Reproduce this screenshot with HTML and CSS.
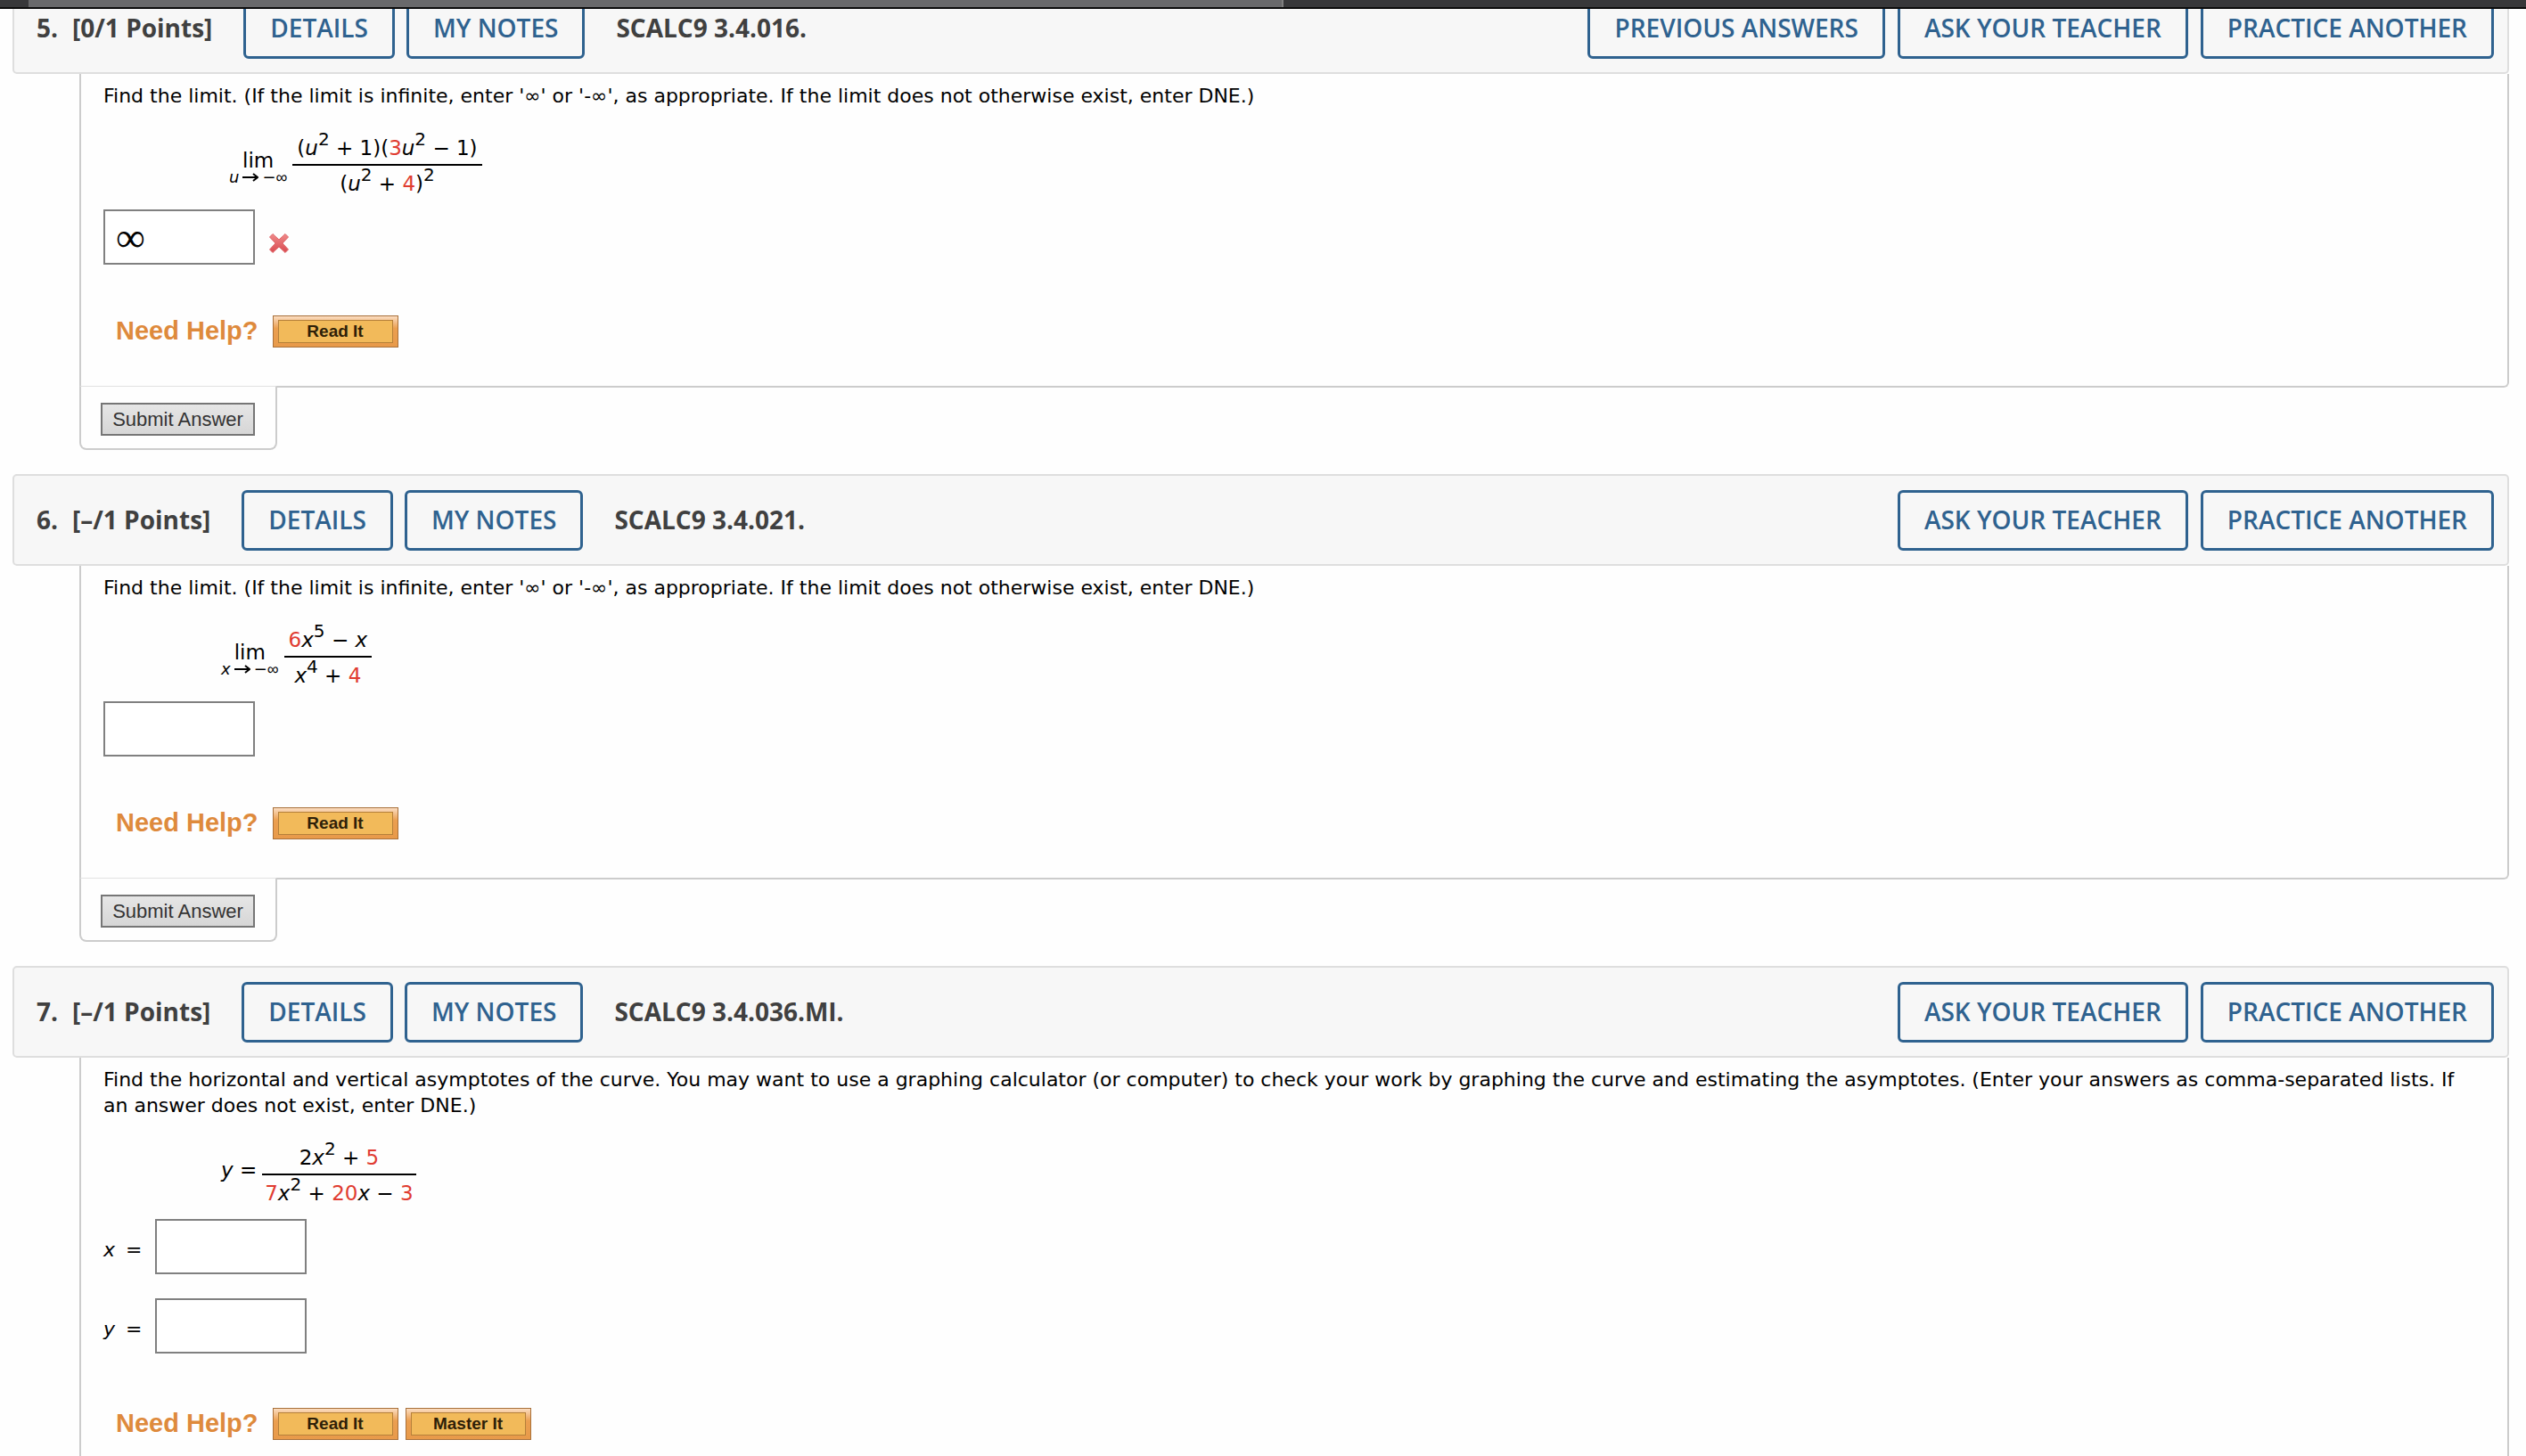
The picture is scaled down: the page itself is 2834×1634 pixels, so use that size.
FILE: index.html
```html
<!DOCTYPE html>
<html lang="en">
<head>
    <meta charset="UTF-8">
    <meta name="viewport" content="width=device-width, initial-scale=1.0">
    <title>SCALC9 3.4 Homework</title>
    <link rel="stylesheet" href="styles.css">
</head>
<body>
    <div class="page">
    <div class="top-bar"><div class="top-bar-tab"></div></div>

    <main class="assignment">
        <section class="question">
            <header class="question-header">
                <h2 class="points"><span>5.</span><span>[0/1 Points]</span></h2>
                <button type="button" class="btn">DETAILS</button>
                <button type="button" class="btn">MY NOTES</button>
                <strong class="code">SCALC9 3.4.016.</strong>
                <div class="actions">
                    <button type="button" class="btn">PREVIOUS ANSWERS</button>
                    <button type="button" class="btn">ASK YOUR TEACHER</button>
                    <button type="button" class="btn">PRACTICE ANOTHER</button>
                </div>
            </header>
            <div class="question-body">
                <p>Find the limit. (If the limit is infinite, enter '∞' or '-∞', as appropriate. If the limit does not otherwise exist, enter DNE.)</p>
                <div class="math math-wide">
                    <div class="limit">
                        <span>lim</span>
                        <span class="under"><i>u</i><svg class="arrow" viewBox="0 0 18 10"><path d="M0 5h16M12 1l5 4-5 4"/></svg>−<span class="inf">∞</span></span>
                    </div>
                    <div class="fraction">
                        <span class="num">(<i>u</i><sup>2</sup> + 1)(<b>3</b><i>u</i><sup>2</sup> − 1)</span>
                        <span class="den">(<i>u</i><sup>2</sup> + <b>4</b>)<sup>2</sup></span>
                    </div>
                </div>
                <div class="answer">
                    <input type="text" class="answer-box" value="∞" aria-label="Answer to question 5">
                    <svg class="wrong" viewBox="0 0 24 24" role="img" aria-label="Incorrect">
                        <defs>
                            <linearGradient id="red" x1="0" y1="0" x2="0" y2="1">
                                <stop offset="0" stop-color="#ef8a8a"/>
                                <stop offset="1" stop-color="#d94a50"/>
                            </linearGradient>
                        </defs>
                        <path fill="url(#red)" stroke="#e0696c" stroke-linejoin="round" d="M5 1.500L12 8l7-6.500L22.500 5 16 12l6.500 7-3.500 3.500L12 16l-7 6.500L1.500 19 8 12 1.500 5z"/>
                    </svg>
                </div>
                <div class="help">
                    <span class="help-label">Need Help?</span>
                    <button type="button" class="help-btn"><span>Read It</span></button>
                </div>
            </div>
            <div class="submit-tab"><button type="button" class="submit">Submit Answer</button></div>
        </section>

        <section class="question">
            <header class="question-header">
                <h2 class="points"><span>6.</span><span>[–/1 Points]</span></h2>
                <button type="button" class="btn">DETAILS</button>
                <button type="button" class="btn">MY NOTES</button>
                <strong class="code">SCALC9 3.4.021.</strong>
                <div class="actions">
                    <button type="button" class="btn">ASK YOUR TEACHER</button>
                    <button type="button" class="btn">PRACTICE ANOTHER</button>
                </div>
            </header>
            <div class="question-body">
                <p>Find the limit. (If the limit is infinite, enter '∞' or '-∞', as appropriate. If the limit does not otherwise exist, enter DNE.)</p>
                <div class="math">
                    <div class="limit">
                        <span>lim</span>
                        <span class="under"><i>x</i><svg class="arrow" viewBox="0 0 18 10"><path d="M0 5h16M12 1l5 4-5 4"/></svg>−<span class="inf">∞</span></span>
                    </div>
                    <div class="fraction">
                        <span class="num"><b>6</b><i>x</i><sup>5</sup> − <i>x</i></span>
                        <span class="den"><i>x</i><sup>4</sup> + <b>4</b></span>
                    </div>
                </div>
                <div class="answer">
                    <input type="text" class="answer-box" aria-label="Answer to question 6">
                </div>
                <div class="help">
                    <span class="help-label">Need Help?</span>
                    <button type="button" class="help-btn"><span>Read It</span></button>
                </div>
            </div>
            <div class="submit-tab"><button type="button" class="submit">Submit Answer</button></div>
        </section>

        <section class="question">
            <header class="question-header">
                <h2 class="points"><span>7.</span><span>[–/1 Points]</span></h2>
                <button type="button" class="btn">DETAILS</button>
                <button type="button" class="btn">MY NOTES</button>
                <strong class="code">SCALC9 3.4.036.MI.</strong>
                <div class="actions">
                    <button type="button" class="btn">ASK YOUR TEACHER</button>
                    <button type="button" class="btn">PRACTICE ANOTHER</button>
                </div>
            </header>
            <div class="question-body">
                <p>Find the horizontal and vertical asymptotes of the curve. You may want to use a graphing calculator (or computer) to check your work by graphing the curve and estimating the asymptotes. (Enter your answers as comma-separated lists. If an answer does not exist, enter DNE.)</p>
                <div class="math">
                    <span class="lhs"><i>y</i> =</span>
                    <div class="fraction">
                        <span class="num">2<i>x</i><sup>2</sup> + <b>5</b></span>
                        <span class="den"><b>7</b><i>x</i><sup>2</sup> + <b>20</b><i>x</i> − <b>3</b></span>
                    </div>
                </div>
                <div class="answer-list">
                    <div class="answer">
                        <label for="q7x"><i>x</i><span>=</span></label>
                        <input type="text" class="answer-box" id="q7x">
                    </div>
                    <div class="answer">
                        <label for="q7y"><i>y</i><span>=</span></label>
                        <input type="text" class="answer-box" id="q7y">
                    </div>
                </div>
                <div class="help">
                    <span class="help-label">Need Help?</span>
                    <button type="button" class="help-btn"><span>Read It</span></button>
                    <button type="button" class="help-btn"><span>Master It</span></button>
                </div>
            </div>
        </section>
    </main>
    </div>
</body>
</html>
```
FILE: styles.css
```css
* {
    box-sizing: border-box;
}
body {
    margin: 0;
    background: #fefefe;
    color: black;
    font-family: Verdana, "DejaVu Sans", sans-serif;
    font-size: 22px;
    line-height: 29px;
}
.page {
    height: 100vh;
    overflow: hidden;
}
.top-bar {
    position: absolute;
    top: 0;
    left: 0;
    right: 0;
    height: 10px;
    background: #38383a;
    border-bottom: 2px solid #0c0c0c;
}
.top-bar-tab {
    width: 51%;
    max-width: 1440px;
    height: 8px;
    padding-left: 32px;
    background: #69696b;
    background-clip: content-box;
    border-right: 2px solid #808080;
}
.assignment {
    margin-top: -20px;
    padding: 0 19px 0 14px;
}
.question {
    margin-bottom: 27px;
}

/* header strip */
.question-header {
    display: flex;
    align-items: center;
    gap: 13px;
    height: 103px;
    padding: 0 15px 0 25px;
    background: #f7f7f7;
    border: 2px solid #dedede;
    border-radius: 5px;
    font-family: "Open Sans", sans-serif;
    font-size: 28px;
    color: #404040;
}
.points {
    display: flex;
    gap: 16px;
    margin: 0 22px 0 0;
    font-size: 28px;
    font-weight: bold;
}
.code {
    margin-left: 22px;
}
.actions {
    display: flex;
    gap: 14px;
    margin-left: auto;
}
.btn {
    height: 68px;
    padding: 0 27px 2px;
    background: #f7f7f7;
    border: 3px solid #2f628f;
    border-radius: 6px;
    color: #2f628f;
    font-family: "Open Sans", sans-serif;
    font-size: 28px;
    font-weight: 600;
    white-space: nowrap;
    cursor: pointer;
}

/* question body */
.question-body {
    margin-left: 75px;
    padding: 10px 46px 43px 25px;
    border: 2px solid #cccccc;
    border-top: none;
    border-radius: 0 0 6px 0;
}
.question-body p {
    margin: 0;
}

/* formulas */
.math {
    display: flex;
    align-items: center;
    gap: 6px;
    margin: 26px 0 11px;
    padding-left: 132px;
    font-size: 23px;
}
.math-wide {
    padding-left: 141px;
}
.math b {
    color: #e03c31;
    font-weight: normal;
}
.math sup {
    font-size: 20px;
    line-height: 0;
    vertical-align: 11px;
}
.lhs {
    padding-bottom: 12px;
}
.limit {
    display: flex;
    flex-direction: column;
    align-items: center;
    padding-top: 6px;
    line-height: 20px;
}
.under {
    display: flex;
    align-items: center;
    font-size: 18px;
    line-height: 18px;
}
.inf {
    font-family: "Liberation Sans", sans-serif;
}
.arrow {
    width: 18px;
    height: 10px;
    margin: 0 4px;
    fill: none;
    stroke: black;
    stroke-width: 2;
}
.fraction {
    display: flex;
    flex-direction: column;
    text-align: center;
    line-height: 36px;
}
.num {
    padding: 0 5px;
    border-bottom: 2px solid black;
}
.den {
    padding: 2px 3px 0;
}

/* answers */
.answer {
    display: flex;
    align-items: center;
    gap: 15px;
}
.answer-list {
    display: flex;
    flex-direction: column;
    gap: 27px;
    padding-bottom: 4px;
}
.answer label {
    display: flex;
    gap: 12px;
    padding-top: 6px;
}
.answer-box {
    width: 170px;
    height: 62px;
    padding: 0 12px;
    background: white;
    border: 2px solid #808080;
    font-family: "Liberation Serif", serif;
    font-size: 46px;
}
.wrong {
    width: 24px;
    height: 38px;
    padding-top: 14px;
}

/* help row */
.help {
    display: flex;
    align-items: center;
    gap: 8px;
    margin-top: 57px;
    padding-left: 14px;
}
.help-label {
    margin-right: 8px;
    padding-bottom: 2px;
    color: #de8a3c;
    font-family: "Liberation Sans", sans-serif;
    font-size: 29px;
    font-weight: bold;
}
.help-btn {
    width: 141px;
    height: 36px;
    padding: 4px 5px;
    background: linear-gradient(#fbdcc0, #eb9f50 40%, #e89a4a);
    border: 1px solid #a8703a;
    cursor: pointer;
}
.help-btn span {
    display: block;
    border: 1px solid #b5803a;
    background: #f2ba5a;
    color: #2e1f08;
    font-family: "Liberation Sans", sans-serif;
    font-size: 19px;
    font-weight: bold;
    line-height: 24px;
}

/* submit */
.submit-tab {
    position: relative;
    width: 222px;
    height: 72px;
    margin: -2px 0 0 75px;
    padding: 18px 0 0 22px;
    background: #fefefe;
    border: 2px solid #cccccc;
    border-top: 1px solid #e2e2e2;
    border-radius: 0 0 8px 8px;
}
.submit {
    height: 37px;
    width: 173px;
    padding: 0;
    background: linear-gradient(#e6e6e6, #d6d6d6);
    border: 2px solid #767676;
    color: #333333;
    font-family: "Liberation Sans", sans-serif;
    font-size: 22px;
    cursor: pointer;
}
```
